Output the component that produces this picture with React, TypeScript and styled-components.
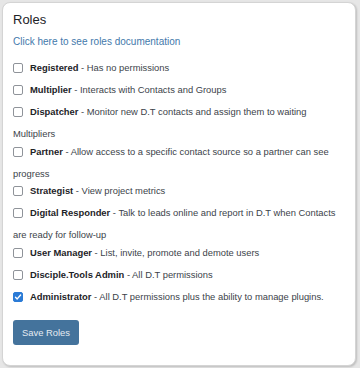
import React from "react";
import styled, { createGlobalStyle } from "styled-components";

const Global = createGlobalStyle`
  html, body { margin: 0; padding: 0; background: #e6e6e6; }
  body { font-family: "Liberation Sans", Arial, sans-serif; }
`;

const Card = styled.div`
  margin: 2px 4px 2px 2px;
  background: #fff;
  border: 1px solid #d4d4d4;
  border-radius: 8px;
  box-shadow: 1px 1px 2px rgba(0, 0, 0, 0.18);
  padding: 9px 10px 20px 10px;
`;

const Title = styled.h2`
  margin: 0 0 7px;
  font-size: 13px;
  line-height: 16px;
  font-weight: normal;
  color: #1d2327;
`;

const DocLink = styled.a`
  display: block;
  margin: 0 0 10px;
  font-size: 10px;
  line-height: 14px;
  color: #4479ab;
  text-decoration: none;
`;

const List = styled.div`
  display: flex;
  flex-direction: column;
`;

const Row = styled.label`
  display: block;
  font-size: 9.4px;
  line-height: 17.5px;
  color: #3c434a;
`;

const Box = styled.span<{ $checked?: boolean }>`
  display: inline-block;
  vertical-align: top;
  box-sizing: border-box;
  width: 10px;
  height: 10px;
  margin: 4px 7px 8px 0;
  border-radius: 2px;
  border: 1px solid ${(p) => (p.$checked ? "#2b7bd6" : "#8f9399")};
  background: ${(p) => (p.$checked ? "#2b7bd6" : "#fff")};
  position: relative;
  svg { position: absolute; left: 0; top: 0; }
`;

const Name = styled.strong`
  color: #1d2327;
  font-weight: bold;
`;

const SaveButton = styled.button`
  margin-top: 10px;
  height: 25px;
  width: 66px;
  padding: 0;
  border: none;
  border-radius: 3px;
  background: #44739c;
  color: #e4ebf2;
  font-family: "Liberation Sans", Arial, sans-serif;
  font-size: 9.4px;
  cursor: pointer;
`;

const roles: { name: string; desc: string; checked?: boolean }[] = [
  { name: "Registered", desc: "Has no permissions" },
  { name: "Multiplier", desc: "Interacts with Contacts and Groups" },
  { name: "Dispatcher", desc: "Monitor new D.T contacts and assign them to waiting Multipliers" },
  { name: "Partner", desc: "Allow access to a specific contact source so a partner can see progress" },
  { name: "Strategist", desc: "View project metrics" },
  { name: "Digital Responder", desc: "Talk to leads online and report in D.T when Contacts are ready for follow-up" },
  { name: "User Manager", desc: "List, invite, promote and demote users" },
  { name: "Disciple.Tools Admin", desc: "All D.T permissions" },
  { name: "Administrator", desc: "All D.T permissions plus the ability to manage plugins.", checked: true },
];

export default function App() {
  return (
    <>
      <Global />
      <Card>
        <Title>Roles</Title>
        <DocLink href="#">Click here to see roles documentation</DocLink>
        <List>
          {roles.map((r) => (
            <Row key={r.name}>
              <Box $checked={r.checked}>
                {r.checked && (
                  <svg width="8" height="8" viewBox="0 0 8 8">
                    <path d="M1.5 4.2 L3.2 5.9 L6.6 2" fill="none" stroke="#fff" strokeWidth="1.4" strokeLinecap="round" strokeLinejoin="round" />
                  </svg>
                )}
              </Box>
              <Name>{r.name}</Name> - {r.desc}
            </Row>
          ))}
        </List>
        <SaveButton>Save Roles</SaveButton>
      </Card>
    </>
  );
}
